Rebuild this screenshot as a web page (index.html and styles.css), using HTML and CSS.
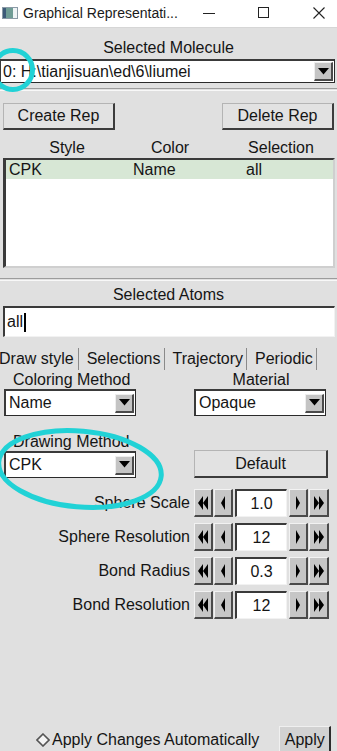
FILE: index.html
```html
<!DOCTYPE html>
<html lang="en">
<head>
  <meta charset="UTF-8" />
  <meta name="viewport" content="width=device-width, initial-scale=1.0"/>
  <title>Graphical Representations</title>
  <link rel="stylesheet" href="styles.css">
</head>
<body>
  <div class="window">
    <header class="titlebar">
      <svg class="app-icon" width="16" height="12" viewBox="0 0 16 12">
        <rect x="0.5" y="0.5" width="15" height="11" fill="#fff" stroke="#8a9aa6"/>
        <rect x="1" y="1" width="3" height="10" fill="#3d5a78"/>
        <rect x="4" y="1" width="7" height="10" fill="#6f9c95"/>
        <rect x="11" y="1" width="4" height="10" fill="#eef3f5"/>
      </svg>
      <span class="title">Graphical Representati...</span>
      <div class="win-controls">
        <svg width="14" height="14" viewBox="0 0 14 14"><line x1="1" y1="7.5" x2="13" y2="7.5" stroke="#222" stroke-width="1"/></svg>
        <svg width="14" height="14" viewBox="0 0 14 14"><rect x="1.5" y="1.5" width="10" height="10" fill="none" stroke="#222" stroke-width="1"/></svg>
        <svg width="14" height="14" viewBox="0 0 14 14"><path d="M1.5 1.5 L12.5 12.5 M12.5 1.5 L1.5 12.5" stroke="#222" stroke-width="1.1"/></svg>
      </div>
    </header>

    <main class="panel">
      <div class="caption">Selected Molecule</div>
      <div class="combo combo-mol">
        <span class="combo-text">0: H:\tianjisuan\ed\6\liumei</span>
        <span class="combo-btn"><svg width="11" height="7" viewBox="0 0 11 7"><path d="M0 0 H11 L5.5 6.5 Z" fill="#000"/></svg></span>
      </div>
      <div class="groove"></div>

      <div class="rep-buttons">
        <button class="btn">Create Rep</button>
        <button class="btn">Delete Rep</button>
      </div>

      <div class="rep-head"><span>Style</span><span>Color</span><span>Selection</span></div>
      <div class="rep-list">
        <div class="rep-row is-selected"><span>CPK</span><span>Name</span><span>all</span></div>
      </div>
      <div class="groove groove-low"></div>

      <div class="caption caption-atoms">Selected Atoms</div>
      <div class="entry">all<span class="caret"></span></div>

      <nav class="tabs">
        <span class="tab tab-active">Draw style</span>
        <span class="tab">Selections</span>
        <span class="tab">Trajectory</span>
        <span class="tab">Periodic</span>
      </nav>

      <section class="draw-grid">
        <div class="field">
          <div class="field-label">Coloring Method</div>
          <div class="combo combo-small">
            <span class="combo-text">Name</span>
            <span class="combo-btn"><svg width="11" height="7" viewBox="0 0 11 7"><path d="M0 0 H11 L5.5 6.5 Z" fill="#000"/></svg></span>
          </div>
        </div>
        <div class="field">
          <div class="field-label centered">Material</div>
          <div class="combo combo-small">
            <span class="combo-text">Opaque</span>
            <span class="combo-btn"><svg width="11" height="7" viewBox="0 0 11 7"><path d="M0 0 H11 L5.5 6.5 Z" fill="#000"/></svg></span>
          </div>
        </div>
        <div class="field field-low">
          <div class="field-label">Drawing Method</div>
          <div class="combo combo-small">
            <span class="combo-text">CPK</span>
            <span class="combo-btn"><svg width="11" height="7" viewBox="0 0 11 7"><path d="M0 0 H11 L5.5 6.5 Z" fill="#000"/></svg></span>
          </div>
        </div>
        <div class="field field-low field-end">
          <button class="btn btn-default">Default</button>
        </div>
      </section>

      <section class="spinners">
        <div class="spin-row">
          <span class="spin-label">Sphere Scale</span>
          <div class="spinner">
            <span class="spin-btn"><svg width="12" height="14" viewBox="0 0 12 14"><path d="M6 0 L1 7 L6 14 Z M11 0 L6 7 L11 14 Z" fill="#000"/></svg></span>
            <span class="spin-btn"><svg width="8" height="14" viewBox="0 0 8 14"><path d="M6 0 L2 7 L6 14 Z" fill="#000"/></svg></span>
            <span class="spin-value">1.0</span>
            <span class="spin-btn"><svg width="8" height="14" viewBox="0 0 8 14"><path d="M2 0 L6 7 L2 14 Z" fill="#000"/></svg></span>
            <span class="spin-btn wide"><svg width="12" height="14" viewBox="0 0 12 14"><path d="M1 0 L6 7 L1 14 Z M6 0 L11 7 L6 14 Z" fill="#000"/></svg></span>
          </div>
        </div>
        <div class="spin-row">
          <span class="spin-label">Sphere Resolution</span>
          <div class="spinner">
            <span class="spin-btn"><svg width="12" height="14" viewBox="0 0 12 14"><path d="M6 0 L1 7 L6 14 Z M11 0 L6 7 L11 14 Z" fill="#000"/></svg></span>
            <span class="spin-btn"><svg width="8" height="14" viewBox="0 0 8 14"><path d="M6 0 L2 7 L6 14 Z" fill="#000"/></svg></span>
            <span class="spin-value">12</span>
            <span class="spin-btn"><svg width="8" height="14" viewBox="0 0 8 14"><path d="M2 0 L6 7 L2 14 Z" fill="#000"/></svg></span>
            <span class="spin-btn wide"><svg width="12" height="14" viewBox="0 0 12 14"><path d="M1 0 L6 7 L1 14 Z M6 0 L11 7 L6 14 Z" fill="#000"/></svg></span>
          </div>
        </div>
        <div class="spin-row">
          <span class="spin-label">Bond Radius</span>
          <div class="spinner">
            <span class="spin-btn"><svg width="12" height="14" viewBox="0 0 12 14"><path d="M6 0 L1 7 L6 14 Z M11 0 L6 7 L11 14 Z" fill="#000"/></svg></span>
            <span class="spin-btn"><svg width="8" height="14" viewBox="0 0 8 14"><path d="M6 0 L2 7 L6 14 Z" fill="#000"/></svg></span>
            <span class="spin-value">0.3</span>
            <span class="spin-btn"><svg width="8" height="14" viewBox="0 0 8 14"><path d="M2 0 L6 7 L2 14 Z" fill="#000"/></svg></span>
            <span class="spin-btn wide"><svg width="12" height="14" viewBox="0 0 12 14"><path d="M1 0 L6 7 L1 14 Z M6 0 L11 7 L6 14 Z" fill="#000"/></svg></span>
          </div>
        </div>
        <div class="spin-row">
          <span class="spin-label">Bond Resolution</span>
          <div class="spinner">
            <span class="spin-btn"><svg width="12" height="14" viewBox="0 0 12 14"><path d="M6 0 L1 7 L6 14 Z M11 0 L6 7 L11 14 Z" fill="#000"/></svg></span>
            <span class="spin-btn"><svg width="8" height="14" viewBox="0 0 8 14"><path d="M6 0 L2 7 L6 14 Z" fill="#000"/></svg></span>
            <span class="spin-value">12</span>
            <span class="spin-btn"><svg width="8" height="14" viewBox="0 0 8 14"><path d="M2 0 L6 7 L2 14 Z" fill="#000"/></svg></span>
            <span class="spin-btn wide"><svg width="12" height="14" viewBox="0 0 12 14"><path d="M1 0 L6 7 L1 14 Z M6 0 L11 7 L6 14 Z" fill="#000"/></svg></span>
          </div>
        </div>
      </section>

      <footer class="apply-bar">
        <svg class="radio" width="14" height="14" viewBox="0 0 14 14">
          <path d="M7 1 L13 7 L7 13 L1 7 Z" fill="#f4f4f4" stroke="#555" stroke-width="1.6"/>
        </svg>
        <span class="apply-text">Apply Changes Automatically</span>
        <button class="btn btn-apply">Apply</button>
      </footer>
    </main>

    <svg class="annotations" width="337" height="751" viewBox="0 0 337 751">
      <circle cx="13" cy="70" r="19.5" fill="none" stroke="#21d2d6" stroke-width="5"/>
      <ellipse cx="80" cy="469" rx="81.5" ry="38" fill="none" stroke="#21d2d6" stroke-width="5" transform="rotate(5 80 469)"/>
    </svg>
  </div>
</body>
</html>
```

FILE: styles.css
```css
body {
  margin: 0;
  font-family: 'Liberation Sans', Arial, sans-serif;
  font-size: 16px;
  color: #151515;
  background: #e0e0e0;
  overflow: hidden;
}
.window {
  position: relative;
  width: 337px;
  height: 751px;
  overflow: hidden;
  background: #e0e0e0;
}
.titlebar {
  height: 28px;
  background: #fff;
  display: flex;
  align-items: center;
  box-sizing: border-box;
  border-bottom: 1px solid #d6d6d6;
}
.app-icon {
  margin-left: 2px;
  margin-top: -1px;
}
.title {
  margin-left: 5px;
  font-size: 14px;
  color: #1a1a1a;
  margin-top: -1px;
}
.win-controls {
  margin-left: auto;
  display: flex;
  align-items: center;
  gap: 41px;
  margin-right: 11px;
  margin-top: -2px;
}
.panel {
  display: flex;
  flex-direction: column;
}
.caption {
  margin-top: 10px;
  line-height: 20px;
  text-align: center;
}
.caption-atoms {
  margin-top: 4px;
}
.combo {
  display: flex;
  align-items: center;
  background: #fff;
  box-sizing: border-box;
  border-style: solid;
  border-width: 2px 1px 1px 2px;
  border-color: #3a3a3a #2a2a2a #2a2a2a #3a3a3a;
}
.combo-mol {
  margin-top: 1px;
  height: 24px;
  width: 336px;
  margin-left: -1px;
}
.combo-text {
  flex: 1;
  padding-left: 2px;
  white-space: nowrap;
  overflow: hidden;
}
.combo-btn {
  width: 19px;
  height: 19px;
  box-sizing: border-box;
  background: #c4c4c4;
  border-style: solid;
  border-width: 1px 2px 2px 1px;
  border-color: #eeeeee #4a4a4a #4a4a4a #eeeeee;
  display: flex;
  align-items: center;
  justify-content: center;
  margin-right: 1px;
}
.groove {
  margin-top: 5px;
  height: 1px;
  border-top: 1px solid #9c9c9c;
  border-bottom: 1px solid #f8f8f8;
}
.groove-low {
  margin-top: 10px;
}
.rep-buttons {
  margin-top: 12px;
  padding: 0 3px;
  display: flex;
  justify-content: space-between;
}
.btn {
  font-family: inherit;
  font-size: 16px;
  color: #151515;
  background: #e2e2e2;
  box-sizing: border-box;
  border-style: solid;
  border-width: 1px 2px 2px 1px;
  border-color: #b4b4b4 #3c3c3c #3c3c3c #b4b4b4;
  padding: 0;
  cursor: pointer;
}
.rep-buttons .btn {
  width: 112px;
  height: 27px;
}
.rep-head {
  margin-top: 8px;
  line-height: 20px;
  display: grid;
  grid-template-columns: 134px 72px 1fr;
  text-align: center;
}
.rep-head span:nth-child(3) {
  padding-left: 19px;
}
.rep-list {
  margin: 0 2px 0 3px;
  height: 110px;
  box-sizing: border-box;
  background: #fff;
  border-style: solid;
  border-width: 2px 2px 2px 3px;
  border-color: #3a3a3a #cfcfcf #cfcfcf #3a3a3a;
}
.rep-row {
  display: grid;
  grid-template-columns: 124px 113px 1fr;
  padding-left: 3px;
  line-height: 19px;
}
.is-selected {
  background: #d7e7d5;
}
.entry {
  margin: 1px 2px 0 3px;
  height: 31px;
  box-sizing: border-box;
  background: #fff;
  border-style: solid;
  border-width: 2px 1px 1px 2px;
  border-color: #3a3a3a #f2f2f2 #f2f2f2 #3a3a3a;
  display: flex;
  align-items: center;
  padding-left: 2px;
}
.caret {
  width: 2px;
  height: 19px;
  background: #000;
  margin-left: 1px;
}
.tabs {
  margin-top: 11px;
  margin-left: -1px;
  height: 22px;
  display: flex;
  align-items: center;
}
.tab {
  line-height: 22px;
  padding: 0 3px 0 8px;
  border-right: 1px solid #8a8a8a;
  white-space: nowrap;
}
.tab-active {
  padding: 0 4px 0 0;
}
.draw-grid {
  margin-top: 1px;
  padding-left: 4px;
  display: grid;
  grid-template-columns: 132px 134px;
  column-gap: 58px;
}
.field-label {
  line-height: 18px;
  padding-left: 9px;
}
.field-label.centered {
  text-align: center;
  padding-left: 0;
}
.combo-small {
  height: 27px;
  width: 132px;
}
.combo-small .combo-text {
  padding-left: 3px;
}
.field-low {
  margin-top: 17px;
}
.field-end {
  display: flex;
  align-items: flex-end;
}
.btn-default {
  width: 134px;
  height: 28px;
}
.spinners {
  margin-top: 11px;
  display: flex;
  flex-direction: column;
  gap: 6px;
}
.spin-row {
  display: flex;
  align-items: center;
  height: 28px;
}
.spin-label {
  width: 190px;
  text-align: right;
}
.spinner {
  margin-left: 4px;
  display: flex;
  gap: 1px;
  height: 28px;
}
.spin-btn {
  width: 19px;
  box-sizing: border-box;
  background: #c6c6c6;
  border-style: solid;
  border-width: 1px 2px 2px 1px;
  border-color: #f2f2f2 #4a4a4a #4a4a4a #f2f2f2;
  display: flex;
  align-items: center;
  justify-content: center;
}
.spin-btn.wide {
  width: 20px;
}
.spin-value {
  width: 52px;
  margin: 0 1px;
  box-sizing: border-box;
  background: #fff;
  border-style: solid;
  border-width: 2px 1px 1px 2px;
  border-color: #3a3a3a #f2f2f2 #f2f2f2 #3a3a3a;
  text-align: center;
  line-height: 25px;
}
.apply-bar {
  margin-top: 107px;
  display: flex;
  align-items: flex-start;
}
.radio {
  margin-left: 36px;
  margin-top: 7px;
}
.apply-text {
  margin-left: 2px;
  margin-top: 5px;
  line-height: 18px;
  white-space: nowrap;
}
.btn-apply {
  margin-left: 20px;
  width: 52px;
  height: 30px;
  background: #d2d2d2;
  border-color: #f0f0f0 #2c2c2c #2c2c2c #f0f0f0;
  padding-bottom: 2px;
}
.annotations {
  position: absolute;
  left: 0;
  top: 0;
  pointer-events: none;
}
```
